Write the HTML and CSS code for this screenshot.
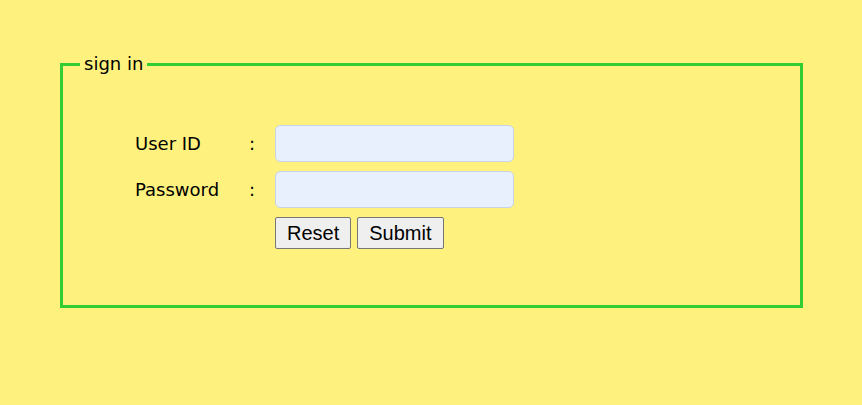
FILE: index.html
```html
<!DOCTYPE html>
<html>
<head>
<meta charset="utf-8">
<title>sign in</title>
<link rel="stylesheet" href="styles.css">
</head>
<body>
<form class="login">
  <fieldset class="box">
    <legend class="legend">sign in</legend>
    <div class="grid">
      <label class="label" for="uid">User ID</label>
      <span class="colon">:</span>
      <input class="field" id="uid" type="text">
      <label class="label" for="pw">Password</label>
      <span class="colon">:</span>
      <input class="field" id="pw" type="password">
      <span></span>
      <span></span>
      <div class="buttons">
        <button class="btn" type="reset">Reset</button>
        <button class="btn" type="submit">Submit</button>
      </div>
    </div>
  </fieldset>
</form>
</body>
</html>
```
FILE: styles.css
```css
html, body {
  margin: 0;
  padding: 0;
  background: #fef17e;
  height: 100%;
}
body {
  font-family: "DejaVu Sans", Verdana, sans-serif;
  font-size: 18px;
  color: #000;
  padding: 54px 0 0 60px;
  box-sizing: border-box;
}
.login {
  margin: 0;
}
.box {
  width: 743px;
  height: 254px;
  box-sizing: border-box;
  margin: 0;
  border: 3px solid #32cd32;
  padding: 0;
}
.legend {
  margin-left: 17px;
  padding: 0 4px 0 4px;
  line-height: 20px;
}
.grid {
  display: grid;
  grid-template-columns: 114px 26px 240px;
  row-gap: 9px;
  align-items: center;
  margin: 51px 0 0 72px;
}
.label, .colon {
  line-height: 20px;
}
.field {
  width: 239px;
  height: 37px;
  box-sizing: border-box;
  border: 1px solid #c8d3e4;
  border-radius: 5px;
  background: #e8f0fe;
  margin: 0;
  padding: 0 8px;
  outline: none;
}
.buttons {
  display: flex;
  gap: 6px;
}
.btn {
  font-family: "Liberation Sans", Arial, sans-serif;
  font-size: 20px;
  height: 32px;
  padding: 0 11px;
  margin: 0;
  background: #efefef;
  border: 1px solid #767676;
  border-radius: 2px;
  color: #000;
}
```
